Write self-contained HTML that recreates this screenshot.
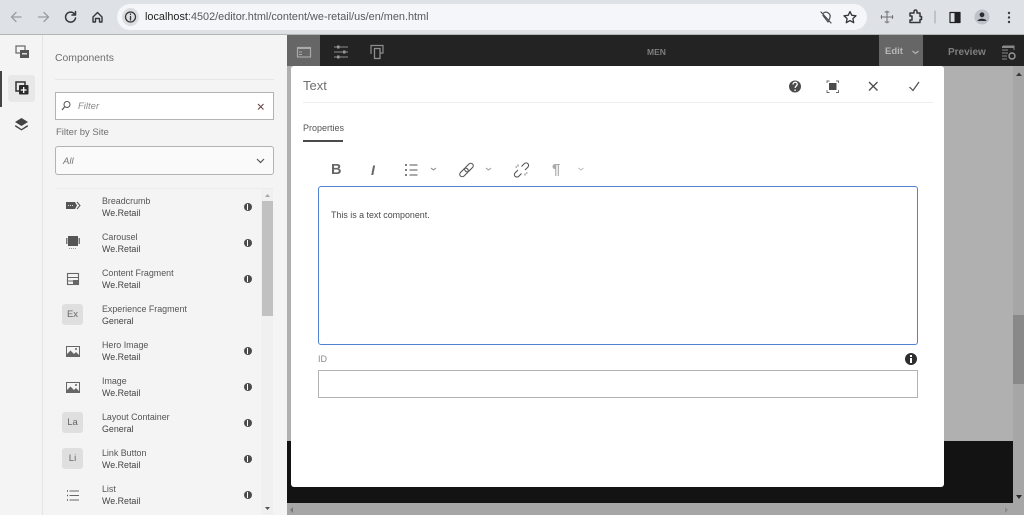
<!DOCTYPE html>
<html><head><meta charset="utf-8"><style>
html,body{margin:0;padding:0;width:1024px;height:515px;overflow:hidden;background:#f4f4f4}
body{position:relative;font-family:"Liberation Sans",sans-serif;color:#4b4b4b;filter:blur(.3px)}
.a{position:absolute}
.t{position:absolute;white-space:nowrap;line-height:12px}
svg{position:absolute;overflow:visible}
.n{font-size:8.900px;color:#555;left:102px}
.s{font-size:8.900px;color:#444;left:102px}
.tile{position:absolute;left:62px;width:21px;height:21px;background:#dfdfdf;border-radius:3px;font-size:9.500px;color:#666;text-align:center;line-height:21px}
.i{position:absolute;left:243.500px;width:8px;height:8px;border-radius:50%;background:#4b4b4b}
.i:before{content:"";position:absolute;left:3.200px;top:1.200px;width:1.600px;height:1.400px;background:#fff}
.i:after{content:"";position:absolute;left:3.200px;top:3.300px;width:1.600px;height:3.400px;background:#fff}
</style></head><body>
<!-- chrome -->
<div class="a" style="left:0;top:0;width:1024px;height:35px;background:#dee1e6;border-bottom:1px solid #b5b5b8;box-sizing:border-box"></div>
<div class="a" style="left:117px;top:4px;width:750px;height:26px;border-radius:13px;background:#f4f6f9"></div>
<div class="a" style="left:122px;top:8px;width:17px;height:18px;border-radius:50%;background:#dcdde1"></div>
<svg style="left:0;top:0" width="1024" height="35" fill="none" stroke-linecap="round" stroke-linejoin="round">
<path d="M21 17H12M16 12.500L11.500 17L16 21.500" stroke="#9a9da3" stroke-width="1.300"/>
<path d="M38.500 17H48M44 12.500L48.500 17L44 21.500" stroke="#9a9da3" stroke-width="1.300"/>
<path d="M74.500 14A5 5 0 1 0 75.500 18M75.500 11.500V15H72" stroke="#33363a" stroke-width="1.500"/>
<path d="M93 17L97.500 12.500L102 17V22H99.500V18.500H95.500V22H93V17Z" stroke="#33363a" stroke-width="1.400"/>
<circle cx="130.500" cy="17" r="5" stroke="#33363a" stroke-width="1.300"/><path d="M130.500 16.500V20M130.500 14V14.500" stroke="#33363a" stroke-width="1.300"/>
<path d="M821 12L831 23M823.500 13A4.200 4.200 0 0 1 830 17.500L828 22L823 15.500" stroke="#4a4c50" stroke-width="1.200"/>
<path d="M850 11.500L851.800 15.300L856 15.800L852.900 18.600L853.700 22.700L850 20.600L846.300 22.700L847.100 18.600L844 15.800L848.200 15.300Z" stroke="#33363a" stroke-width="1.300"/>
<path d="M887 11V23M881 17H893M885 12H889M885 22H889M881.500 15.500V18.500M892.500 15.500V18.500" stroke="#6d7076" stroke-width="1"/>
<path d="M910 13H914V11.500A1.500 1.500 0 0 1 917 11.500V13H920V16.500H921.500V19.500H920V22.500H910V20H912V16H910Z" stroke="#33363a" stroke-width="1.500"/>
<path d="M935 11V23" stroke="#a0a2a8" stroke-width="1"/>
<rect x="950" y="12.500" width="10" height="10" stroke="#202124" stroke-width="1.200"/><rect x="954.500" y="12.500" width="5.500" height="10" fill="#202124"/>
<circle cx="982" cy="17" r="7.500" fill="#bdc1c9"/><circle cx="982" cy="14.800" r="2.400" fill="#2b2d31"/><path d="M977.500 21C978 18 986 18 986.500 21Z" fill="#2b2d31"/>
<circle cx="1009" cy="13" r="1.200" fill="#3a3c40"/><circle cx="1009" cy="17.500" r="1.200" fill="#3a3c40"/><circle cx="1009" cy="22" r="1.200" fill="#3a3c40"/>
</svg>
<div class="t" style="left:145px;top:11px;font-size:10.880px;color:#55585d"><span style="color:#222">localhost</span>:4502/editor.html/content/we-retail/us/en/men.html</div>

<!-- rail -->
<div class="a" style="left:0;top:35px;width:43px;height:480px;background:#f4f4f4;border-right:1px solid #e4e4e4;box-sizing:border-box"></div>
<div class="a" style="left:0;top:71px;width:2px;height:36px;background:#444"></div>
<div class="a" style="left:8px;top:75px;width:27px;height:27px;background:#e8e8e8;border-radius:3px"></div>
<svg style="left:0;top:35px" width="43" height="110">
<rect x="16" y="11" width="9" height="7" fill="none" stroke="#666" stroke-width="1.200"/><rect x="20" y="15" width="9" height="8" fill="#555"/><rect x="22" y="18" width="5" height="1.500" fill="#ddd"/>
<rect x="16" y="47" width="9" height="9" fill="none" stroke="#333" stroke-width="1.500"/><rect x="19" y="50" width="9.500" height="9.500" fill="#2b2b2b" rx="1"/><path d="M23.700 52V58M20.800 55H26.600" stroke="#fff" stroke-width="1.300"/>
<path d="M21.500 83L28 87L21.500 91L15 87Z" fill="#444"/><path d="M15.500 90L21.500 94L27.500 90L28 91.500L21.500 95.500L15 91.500Z" fill="#444"/>
</svg>

<!-- panel -->
<div class="t" style="left:55px;top:53px;font-size:10.400px;color:#6e6e6e">Components</div>
<div class="a" style="left:55px;top:79px;width:219px;height:1px;background:#e6e6e6"></div>
<div class="a" style="left:55px;top:92px;width:219px;height:28px;background:#fff;border:1px solid #b3b3b3;box-sizing:border-box"></div>
<svg style="left:55px;top:92px" width="219" height="28" fill="none">
<circle cx="12" cy="12.500" r="3" stroke="#555" stroke-width="1"/><path d="M9.500 15L7 18" stroke="#555" stroke-width="1.200"/>
<path d="M203 12L208.500 17.500M208.500 12L203 17.500" stroke="#6b4a4a" stroke-width="1.100"/></svg>
<div class="t" style="left:78px;top:101px;font-size:9.500px;font-style:italic;color:#8a8a8a">Filter</div>
<div class="t" style="left:56px;top:127px;font-size:9.500px;color:#707070">Filter by Site</div>
<div class="a" style="left:55px;top:146px;width:219px;height:29px;background:#fafafa;border:1px solid #b3b3b3;border-radius:3px;box-sizing:border-box"></div>
<div class="t" style="left:63px;top:156px;font-size:9.500px;font-style:italic;color:#777">All</div>
<svg style="left:255px;top:157px" width="12" height="8" fill="none"><path d="M2 2L5.500 5.500L9 2" stroke="#555" stroke-width="1.200"/></svg>
<div class="a" style="left:55px;top:188px;width:219px;height:1px;background:#ececec"></div>

<div class="a" style="left:261px;top:189px;width:12px;height:326px;background:#f0f0f0"></div>
<div class="a" style="left:262px;top:201px;width:11px;height:115px;background:#c1c1c1"></div>
<svg style="left:261px;top:189px" width="12" height="326"><path d="M4 8L6.500 5L9 8Z" fill="#a8a8a8"/><path d="M4 318H9L6.500 321Z" fill="#555"/></svg>

<div class="t n" style="top:195px">Breadcrumb</div><div class="t s" style="top:207px">We.Retail</div>
<div class="t n" style="top:231px">Carousel</div><div class="t s" style="top:243px">We.Retail</div>
<div class="t n" style="top:267px">Content Fragment</div><div class="t s" style="top:279px">We.Retail</div>
<div class="t n" style="top:303px">Experience Fragment</div><div class="t s" style="top:315px">General</div>
<div class="t n" style="top:339px">Hero Image</div><div class="t s" style="top:351px">We.Retail</div>
<div class="t n" style="top:375px">Image</div><div class="t s" style="top:387px">We.Retail</div>
<div class="t n" style="top:411px">Layout Container</div><div class="t s" style="top:423px">General</div>
<div class="t n" style="top:447px">Link Button</div><div class="t s" style="top:459px">We.Retail</div>
<div class="t n" style="top:483px">List</div><div class="t s" style="top:495px">We.Retail</div>

<div class="i" style="top:203px"></div><div class="i" style="top:239px"></div><div class="i" style="top:275px"></div>
<div class="i" style="top:347px"></div><div class="i" style="top:383px"></div><div class="i" style="top:419px"></div><div class="i" style="top:455px"></div><div class="i" style="top:491px"></div>
<div class="tile" style="top:304px">Ex</div><div class="tile" style="top:412px">La</div><div class="tile" style="top:448px">Li</div>

<svg style="left:60px;top:190px" width="30" height="320">
<path d="M6 12H15L17 15.500L15 19H6Z" fill="#555"/><path d="M17 12L20 15.500L17 19" fill="none" stroke="#555" stroke-width="1"/><path d="M8 15.500H14" stroke="#ddd" stroke-width="1" stroke-dasharray="1 1"/>
<rect x="8" y="46" width="10" height="10" fill="#555"/><rect x="6" y="48" width="1.500" height="6" fill="#777"/><rect x="18.500" y="48" width="1.500" height="6" fill="#777"/><path d="M9 58.500H17" stroke="#999" stroke-dasharray="1 1"/>
<rect x="7.500" y="83.500" width="11" height="11" fill="none" stroke="#666" stroke-width="1.100"/><path d="M7 87.500H19" stroke="#666"/><rect x="13" y="90" width="6" height="4.500" fill="#666"/><path d="M7 91H13" stroke="#666"/>
<rect x="6.500" y="156.500" width="13" height="10" fill="none" stroke="#666"/><path d="M7 166.500V164L10.500 160.500L14 164L16 162L19 165V166.500Z" fill="#666"/><circle cx="16" cy="159" r="1" fill="#666"/>
<rect x="6.500" y="192.500" width="13" height="10" fill="none" stroke="#666"/><path d="M7 202.500V200L10.500 196.500L14 200L16 198L19 201V202.500Z" fill="#666"/><circle cx="16" cy="195" r="1" fill="#666"/>
<path d="M9.500 301H19M9.500 305.500H19M9.500 310H19" stroke="#666" stroke-width="1"/><path d="M7 301H8M7 305.500H8M7 310H8" stroke="#555" stroke-width="1.500"/>
</svg>

<!-- editor bg -->
<div class="a" style="left:287px;top:35px;width:737px;height:480px;background:#b0b0b0"></div>
<div class="a" style="left:287px;top:35px;width:737px;height:31px;background:#232323"></div>
<div class="a" style="left:287px;top:35px;width:33px;height:31px;background:#666"></div>
<div class="a" style="left:879px;top:35px;width:44px;height:31px;background:#666"></div>
<div class="a" style="left:287px;top:441px;width:726px;height:62px;background:#131313"></div>
<div class="a" style="left:1013px;top:66px;width:11px;height:449px;background:#a6a6a6"></div>
<div class="a" style="left:1013px;top:315px;width:11px;height:69px;background:#898989"></div>
<div class="a" style="left:287px;top:503px;width:737px;height:12px;background:#a6a6a6"></div>
<svg style="left:287px;top:35px" width="737" height="480">
<rect x="10.500" y="12.500" width="13" height="9.500" fill="none" stroke="#aaa" stroke-width="1.200"/><rect x="10" y="12" width="14" height="2" fill="#aaa"/><path d="M12 17H15M12 19.500H15" stroke="#aaa"/>
<path d="M47 12H61M47 17H61M47 22H61" stroke="#8d8d8d" stroke-width="1"/><rect x="50" y="10.500" width="2.500" height="3" fill="#999"/><rect x="56" y="15.500" width="2.500" height="3" fill="#999"/><rect x="50" y="20.500" width="2.500" height="3" fill="#999"/>
<path d="M84 19V10.500H96V18H93" fill="none" stroke="#8d8d8d" stroke-width="1.200"/><rect x="87.500" y="13.500" width="5.500" height="10" fill="none" stroke="#8d8d8d" stroke-width="1.300"/>
<path d="M625.500 16L628.500 18.500L631.500 16" fill="none" stroke="#b5b5b5" stroke-width="1.200"/>
<rect x="715" y="11" width="12" height="2" fill="#888"/><path d="M715 15H721M715 18H721M715 21H720M715 24H720" stroke="#888"/><path d="M716 11H727V15" fill="none" stroke="#888"/><circle cx="725" cy="21" r="3" fill="none" stroke="#999" stroke-width="1.400"/>
<path d="M729 41L732 37.500L735 41Z" fill="#3a3a3a"/><path d="M729 460H735L732 464Z" fill="#2a2a2a"/>
<path d="M6 472L3 475L6 478Z" fill="#777"/><path d="M718 472L721 475L718 478Z" fill="#8a8a8a"/>
</svg>
<div class="t" style="left:647px;top:46px;font-size:8.500px;font-weight:bold;color:#7e7e7e">MEN</div>
<div class="t" style="left:885px;top:46px;font-size:9.500px;font-weight:bold;color:#b8b8b8">Edit</div>
<div class="t" style="left:948px;top:47px;font-size:10px;font-weight:bold;color:#7f7f7f">Preview</div>

<!-- dialog -->
<div class="a" style="left:291px;top:66px;width:653px;height:421px;background:#fff;border-radius:3px"></div>
<div class="t" style="left:303px;top:80px;font-size:13px;color:#707070">Text</div>
<div class="a" style="left:303px;top:102px;width:630px;height:1px;background:#eeeeee"></div>
<div class="t" style="left:303px;top:122px;font-size:9px;color:#555">Properties</div>
<div class="a" style="left:303px;top:140px;width:40px;height:2px;background:#4b4b4b"></div>
<svg style="left:291px;top:66px" width="653" height="140" fill="none">
<circle cx="504" cy="20.500" r="6" fill="#4b4b4b"/><path d="M502 18.500C502 15.500 506.200 15.500 506.200 18.200C506.200 20 504.100 20 504.100 22M504.100 23.500V25" stroke="#fff" stroke-width="1.300"/>
<rect x="538" y="17" width="7.500" height="7" fill="#4b4b4b"/><path d="M536 17V15H538.500M545 15H547.500V17M536 24V26.500H538.500M545 26.500H547.500V24" stroke="#666" stroke-width=".9"/>
<path d="M578 16L586.500 24.500M586.500 16L578 24.500" stroke="#4b4b4b" stroke-width="1.300"/>
<path d="M618.500 21L622 24.500L628 16" stroke="#4b4b4b" stroke-width="1.200"/>
<path d="M114 99H116M114 104H116M114 109H116" stroke="#555" stroke-width="1.500"/><path d="M118.500 99H126.500M118.500 104H126.500M118.500 109H126.500" stroke="#555" stroke-width="1.100"/>
<path d="M140 102L142.500 104L145 102" stroke="#888"/>
<g transform="rotate(-45 175.500 104)" stroke="#555" stroke-width="1.100"><rect x="167" y="101.500" width="10" height="5" rx="2.500"/><rect x="174" y="101.500" width="10" height="5" rx="2.500"/></g>
<path d="M195 102L197.500 104L200 102" stroke="#999"/>
<g transform="rotate(-45 230.500 104)" stroke="#555" stroke-width="1.100"><path d="M228 101.500H224A2.500 2.500 0 0 0 224 106.500H228"/><path d="M233 101.500H237A2.500 2.500 0 0 1 237 106.500H233"/></g>
<path d="M227 98.500V100.500M224.500 101H226M234 109.500V107.500M236.500 107H235" stroke="#777"/>
<path d="M287.500 102L290 104L292.500 102" stroke="#bbb"/>
</svg>
<div class="t" style="left:331px;top:163px;font:bold 14.500px/14px 'Liberation Sans',sans-serif;color:#666">B</div>
<div class="t" style="left:371px;top:163px;font:italic bold 14px/14px 'Liberation Sans',sans-serif;color:#666">I</div>
<div class="t" style="left:552px;top:163px;font:bold 15px/14px 'Liberation Sans',sans-serif;color:#aaa">¶</div>
<div class="a" style="left:318px;top:186px;width:600px;height:159px;border:1px solid #4f83d1;border-radius:3px;box-sizing:border-box;background:#fff"></div>
<div class="t" style="left:331px;top:209px;font-size:8.900px;color:#4b4b4b">This is a text component.</div>
<div class="t" style="left:318px;top:353px;font-size:9px;color:#8a8a8a">ID</div>
<div class="a" style="left:905px;top:353px;width:12px;height:12px;border-radius:50%;background:#2e2e2e"><div class="a" style="left:5px;top:2px;width:2.200px;height:2px;background:#fff"></div><div class="a" style="left:5px;top:5px;width:2.200px;height:5px;background:#fff"></div></div>
<div class="a" style="left:318px;top:370px;width:600px;height:28px;border:1px solid #b3b3b3;box-sizing:border-box;background:#fff"></div>
</body></html>
